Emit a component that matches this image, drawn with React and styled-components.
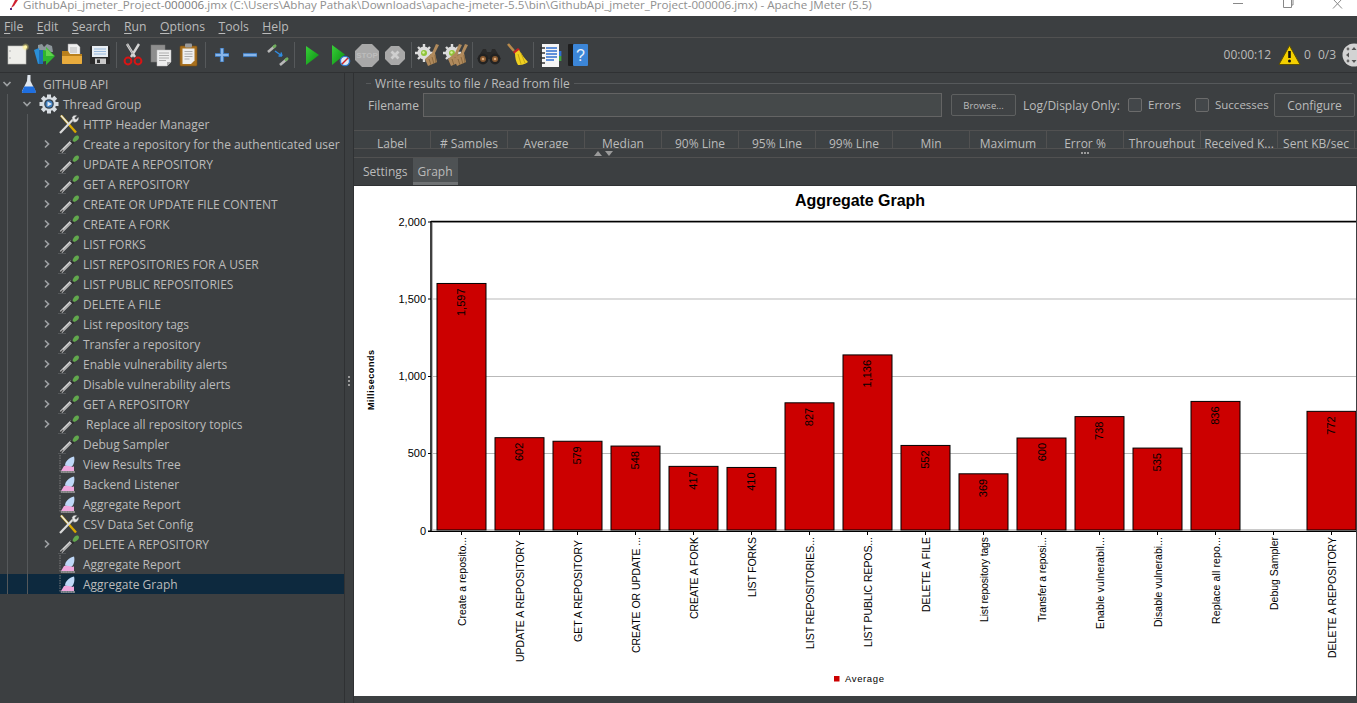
import React from 'react';
import styled, { createGlobalStyle } from 'styled-components';

const Global = createGlobalStyle`
  html, body { margin: 0; padding: 0; background: #3c3f41; overflow: hidden; }
  * { box-sizing: border-box; }
`;

const UI = `"Open Sans", "Noto Sans", sans-serif`;

const Page = styled.div`
  width: 1357px; height: 703px; display: flex; flex-direction: column;
  background: #3c3f41; color: #bbbbbb; font: 11.4px ${UI}; overflow: hidden;
`;
const TitleBar = styled.div`
  height: 16px; flex: none; background: #fff; display: flex; align-items: flex-start;
  padding-left: 6px; overflow: hidden;
`;
const TitleText = styled.div`
  color: #8f8f8f; font: 11.6px/9px ${UI}; margin-left: 3px; white-space: pre; flex: 1;
`;
const Accent = styled.span` color: #7a7a7a; `;
const WinControls = styled.div`
  display: flex; align-items: flex-start; gap: 30px; padding-right: 9px;
`;
const MenuBar = styled.div`
  height: 22px; flex: none; display: flex; align-items: center; gap: 13.5px; padding-left: 4px;
  border-bottom: 1px solid #515151; font-size: 12.2px;
`;
const MenuItem = styled.span` u { text-underline-offset: 2px; } `;
const Toolbar = styled.div`
  height: 35px; flex: none; display: flex; align-items: center; padding: 0 0 1px 2px;
  border-bottom: 1px solid #2f3133;
`;
const ToolSlot = styled.div` width: 28px; height: 28px; flex: none; `;
const ToolSep = styled.div`
  width: 5px; height: 26px; flex: none; display: flex; justify-content: center;
  &::before { content: ''; width: 1px; background: #56595b; }
`;
const Status = styled.div`
  margin-left: auto; display: flex; align-items: center; font-size: 12px;
`;
const StatusText = styled.span` margin-left: ${p => p.$gap}px; `;
const Main = styled.div` flex: 1; display: flex; min-height: 0; `;
const TreePane = styled.div` width: 344px; flex: none; padding-top: 1px; `;
const Row = styled.div`
  height: 20px; display: flex; align-items: center; padding-left: ${p => p.$depth * 20}px;
  font-size: 12px; white-space: pre;
  background-color: ${p => (p.$selected ? '#0d293e' : 'transparent')};
  background-image:
    ${p => (p.$depth >= 1 ? 'linear-gradient(#55585a,#55585a)' : 'none')},
    ${p => (p.$depth >= 2 ? 'linear-gradient(#55585a,#55585a)' : 'none')};
  background-repeat: no-repeat;
  background-size: 1px 100%;
  background-position: 7px 0, 27px 0;
`;
const Arrow = styled.div` width: 14px; height: 20px; flex: none; display: flex; align-items: center; justify-content: center; `;
const RowIcon = styled.div` width: 22px; height: 20px; margin-left: 4px; flex: none; `;
const RowLabel = styled.span` margin-left: 3px; `;
const Splitter = styled.div`
  width: 10px; flex: none; border-left: 1px solid #2f3133; border-right: 1px solid #2f3133;
  display: flex; flex-direction: column; align-items: center; justify-content: center; gap: 2px;
  padding-bottom: 14px;
`;
const Dot = styled.i` width: 2px; height: 2px; background: #9a9a9a; display: block; `;
const RightPane = styled.div` flex: 1; min-width: 0; display: flex; flex-direction: column; `;
const Group = styled.div` height: 57px; flex: none; padding: 2px 5px 0 12px; `;
const GroupTitle = styled.div`
  display: flex; align-items: center; height: 16px; font-size: 12px; white-space: pre;
  &::before { content: ''; width: 5px; height: 1px; background: #56595b; margin-right: 1px; }
  &::after { content: ''; flex: 1; height: 1px; background: #56595b; margin-left: 1px; }
`;
const FormRow = styled.div`
  display: flex; align-items: center; height: 24px; margin-top: 2px; font-size: 12px; white-space: pre;
`;
const FileLabel = styled.span` margin-left: 2px; width: 55px; flex: none; `;
const FileInput = styled.div` width: 519px; height: 24px; flex: none; background: #45494a; border: 1px solid #646464; `;
const SmallButton = styled.div`
  width: 65px; height: 22px; margin-left: 9px; flex: none; display: flex; align-items: center; justify-content: center;
  border: 1px solid #5e6060; border-radius: 2px; background: #3f4244; font-size: 9.5px;
`;
const OnlyLabel = styled.span` margin-left: 7px; width: 105px; flex: none; `;
const Check = styled.div` width: 14px; height: 14px; flex: none; margin-top: -1px; border: 1px solid #6b6b6b; border-radius: 2px; background: #43474a; `;
const CheckLabel = styled.span` margin-left: 6px; margin-top: -2px; width: ${p => p.$w}px; flex: none; font-size: 11.5px; `;
const ConfigButton = styled.div`
  width: 81px; height: 24px; flex: none; display: flex; align-items: center; justify-content: center;
  border: 1px solid #5e6060; border-radius: 2px; background: #3f4244;
`;
const TableHead = styled.div`
  height: 19px; flex: none; display: flex; overflow: hidden; border-top: 1px solid #515151; border-bottom: 1px solid #515151;
`;
const HeadCell = styled.div`
  width: 77px; flex: none; text-align: center; padding-top: 4px; font-size: 12px; line-height: 18px; white-space: nowrap;
  border-right: 1px solid #515151; background: #3e4244; overflow: hidden;
`;
const SplitBar = styled.div`
  height: 9px; flex: none; display: flex; align-items: center; justify-content: center;
  border-bottom: 1px solid #515151;
  gap: 1px;
`;
const SplitArrows = styled.div` width: 30px; margin-right: 458px; margin-left: -30px; display: flex; gap: 3px; padding-left: 2px; `;
const SplitDots = styled.div` display: flex; gap: 1px; margin-right: 0; `;
const Tabs = styled.div`
  height: 28px; flex: none; display: flex; padding-left: 4px; border-bottom: 1px solid #2f3133;
`;
const Tab = styled.div`
  padding: 0 5px; display: flex; align-items: center; font-size: 12px; padding-bottom: 1px;
  ${p => p.$active && `background: #4e5254; box-shadow: inset 0 -3px 0 #6f7274; padding-left: 5px;`}
`;
const ChartWrap = styled.div` height: 510px; flex: none; background: #fff; `;
const ChartSvg = styled.svg` display: block; `;
const BottomStrip = styled.div` flex: 1; background: #3c3f41; `;

/* ---------- icons ---------- */
const Ico = ({ children, vb = '0 0 28 28', w = 28, h = 28 }) => (
  <svg width={w} height={h} viewBox={vb} style={{ display: 'block' }}>{children}</svg>
);
const NewIcon = () => <Ico>
  <defs><radialGradient id="gl"><stop offset="0" stopColor="#ffef80"/><stop offset="1" stopColor="#ffef80" stopOpacity="0"/></radialGradient></defs>
  <rect x="6" y="5" width="18" height="18" fill="#eeeeea" stroke="#bdbdb8" strokeWidth=".6"/>
  <circle cx="8" cy="10" r=".8" fill="#aaa"/><circle cx="8" cy="17" r=".8" fill="#aaa"/>
  <circle cx="23.5" cy="6" r="4" fill="url(#gl)"/><circle cx="23.5" cy="6" r="1.6" fill="#fff6a8"/>
</Ico>;
const TemplatesIcon = () => <Ico>
  <path d="M8 4l4-1 2 3 3-3 5 2 1 6H8z" fill="#8d979b"/>
  <path d="M4 9l5-2 3 15-4 1z" fill="#2a8fd8"/>
  <path d="M9 9h4v14H9z" fill="#1f6fb4"/>
  <path d="M13 9l3 .5V6l9 9-9 9v-4l-3 .5z" fill="#2fb52f"/>
  <path d="M16 7l8 8h-8z" fill="#63d24d"/>
</Ico>;
const OpenIcon = () => <Ico>
  <path d="M10 3h9l3 3v9H10z" fill="#eee" stroke="#999" strokeWidth=".5"/>
  <path d="M12 7h7M12 9h7M12 11h7" stroke="#aaa" strokeWidth=".8"/>
  <path d="M4 10h6l2 3h12v9a1 1 0 0 1-1 1H5a1 1 0 0 1-1-1z" fill="#b9801c"/>
  <path d="M4 15h20v7a1 1 0 0 1-1 1H5a1 1 0 0 1-1-1z" fill="#e9ac3d"/>
</Ico>;
const SaveIcon = () => <Ico>
  <path d="M5 5h18a1 1 0 0 1 1 1v17H4V6a1 1 0 0 1 1-1z" fill="#2a2a2a"/>
  <rect x="6" y="5" width="16" height="11" fill="#e8edf2"/>
  <path d="M8 8h12M8 10.5h12M8 13h12" stroke="#8fb2d8" strokeWidth=".9"/>
  <rect x="9" y="17.5" width="11" height="5.5" fill="#c9c9c9"/><rect x="11" y="18.5" width="3" height="3.5" fill="#333"/>
</Ico>;
const CutIcon = () => <Ico>
  <path d="M8 3l8 13M20 3l-8 13" stroke="#d5d5d5" strokeWidth="2.4"/>
  <path d="M8 3l6 10" stroke="#8a8a8a" strokeWidth=".7"/>
  <circle cx="9" cy="20" r="3.4" fill="none" stroke="#d81414" strokeWidth="2"/>
  <circle cx="19" cy="20" r="3.4" fill="none" stroke="#d81414" strokeWidth="2"/>
</Ico>;
const CopyIcon = () => <Ico>
  <rect x="4" y="4" width="14" height="17" fill="#8e8e8e" stroke="#777" strokeWidth=".5"/>
  <path d="M10 9h14v12l-4 4H10z" fill="#eeeeee" stroke="#bbb" strokeWidth=".5"/>
  <path d="M12 12h10M12 14.5h10M12 17h10M12 19.5h7" stroke="#a5a5a5" strokeWidth=".9"/>
  <path d="M20 25l4-4h-4z" fill="#a8a8a8"/>
</Ico>;
const PasteIcon = () => <Ico>
  <rect x="5" y="5" width="17" height="20" rx="1" fill="#a8701e" stroke="#7a4f12" strokeWidth=".6"/>
  <rect x="10" y="2.5" width="7" height="4" rx="1" fill="#9a9a9a"/>
  <path d="M7.5 7.5h12v12l-3.5 3.5H7.5z" fill="#efefef"/>
  <path d="M9.5 10.5h8M9.5 13h8M9.5 15.5h8M9.5 18h5" stroke="#a5a5a5" strokeWidth=".9"/>
</Ico>;
const PlusIcon = () => <Ico>
  <path d="M14 7v14M7 14h14" stroke="#3f78b8" strokeWidth="4.2"/>
  <path d="M14 7.5v13M7.5 14h13" stroke="#88b6ea" strokeWidth="2.2"/>
</Ico>;
const MinusIcon = () => <Ico>
  <path d="M7 14h14" stroke="#3f78b8" strokeWidth="4.2"/>
  <path d="M7.5 14h13" stroke="#88b6ea" strokeWidth="2.2"/>
</Ico>;
const ToggleIcon = () => <Ico>
  <path d="M4 11l7-6" stroke="#b9b9b9" strokeWidth="2.6"/><path d="M9 6.5l3-2.5" stroke="#6fae5c" strokeWidth="2.6"/>
  <path d="M16 24l7-6" stroke="#b9b9b9" strokeWidth="2.6"/><path d="M21 19.5l3-2.5" stroke="#6fae5c" strokeWidth="2.6"/>
  <path d="M11 10l7 5M18 15l-3.5 0M18 15l-1-3.5" stroke="#2f8be0" strokeWidth="1.5" fill="none"/>
</Ico>;
const PlayIcon = () => <Ico>
  <defs><linearGradient id="pl" x1="0" x2="1" y1="0" y2="1"><stop offset="0" stopColor="#38d038"/><stop offset="1" stopColor="#0a8c12"/></linearGradient></defs>
  <path d="M9 5l13 9-13 10z" fill="url(#pl)"/>
</Ico>;
const NoPauseIcon = () => <Ico>
  <defs><linearGradient id="pl2" x1="0" x2="1" y1="0" y2="1"><stop offset="0" stopColor="#38d038"/><stop offset="1" stopColor="#0a8c12"/></linearGradient></defs>
  <path d="M7 4l13 9.5L7 24z" fill="url(#pl2)"/>
  <circle cx="20" cy="20" r="4.6" fill="#dfe8f5" stroke="#2f7ad0" strokeWidth="1.4"/>
  <path d="M17 23l6-6" stroke="#d02020" strokeWidth="1.4"/>
</Ico>;
const StopIcon = () => <Ico>
  <path d="M9 3h10l7 7v9l-7 7H9l-7-7v-9z" fill="#a8a8a8"/>
  <text x="14" y="17" textAnchor="middle" fontFamily="Liberation Sans, sans-serif" fontWeight="700" fontSize="8" fill="#bdbdbd">STOP</text>
</Ico>;
const ShutIcon = () => <Ico>
  <path d="M10 5h8l6 6v7l-6 6h-8l-6-6v-7z" fill="#a8a8a8"/>
  <path d="M10.5 10.5l7 7M17.5 10.5l-7 7" stroke="#cfcfcf" strokeWidth="2.8"/>
</Ico>;
const Broomlet = ({ dx = 0 }) => <g transform={`translate(${dx} 0)`}>
  <path d="M21 3l3 1-4 8 2 9-9 4-3-7 7-6z" fill="#b08a5c"/>
  <path d="M14 18l2 6M17 16l2 7M20 14l1 8" stroke="#82623a" strokeWidth=".8"/>
</g>;
const GearSmall = () => <g>
  <circle cx="10" cy="12" r="6.5" fill="#dcdcdc"/>
  <path d="M10 3v18M1 12h18M4 6l12 12M16 6L4 18" stroke="#dcdcdc" strokeWidth="2.4"/>
  <circle cx="10" cy="12" r="3" fill="#8fc43a"/><circle cx="9.5" cy="11.5" r="1.2" fill="#d8f0a0"/>
</g>;
const ClearIcon = () => <Ico><GearSmall/><Broomlet dx="1"/></Ico>;
const ClearAllIcon = () => <Ico><GearSmall/><Broomlet dx="-4"/><Broomlet dx="2"/></Ico>;
const SearchIcon = () => <Ico>
  <path d="M8 8h3l1 3h4l1-3h3l6 10H2z" fill="#2a2a2a"/>
  <circle cx="8" cy="18" r="5.4" fill="#222"/><circle cx="20" cy="18" r="5.4" fill="#222"/>
  <circle cx="8" cy="18" r="3" fill="#8a5a30"/><circle cx="20" cy="18" r="3" fill="#8a5a30"/>
  <circle cx="8" cy="18" r="1.3" fill="#d9a878"/><circle cx="20" cy="18" r="1.3" fill="#d9a878"/>
</Ico>;
const BroomIcon = () => <Ico>
  <path d="M5 3l6 7" stroke="#b88a4c" strokeWidth="2.6"/>
  <path d="M10 11l5-4 2 2-4 5z" fill="#c82424"/>
  <path d="M12 12l4-3c3 5 6 9 9 12-4 3-8 3-10 3-2-3-3-7-3-12z" fill="#f0d020"/>
  <path d="M15 13l3 10M18 12l4 10" stroke="#b89a10" strokeWidth=".8"/>
</Ico>;
const LogIcon = () => <Ico>
  <rect x="6" y="3" width="17" height="23" fill="#f5f5f5"/>
  <path d="M4 7h5M4 12h5M4 17h5M4 22h5" stroke="#333" strokeWidth="1.6"/>
  <path d="M10 7h11M10 10h11M10 13h11M10 16h11M10 19h8" stroke="#2f6fd0" strokeWidth="1.4"/>
  <rect x="23" y="10" width="2.4" height="5" fill="#2f6fd0"/><rect x="23" y="15" width="2.4" height="5" fill="#3fa13f"/>
</Ico>;
const HelpIcon = () => <Ico>
  <rect x="4" y="3" width="18" height="22" rx="1" fill="#1e1e1e"/>
  <rect x="9" y="3" width="15" height="22" rx="1" fill="#3c86d8"/>
  <text x="16.5" y="20" textAnchor="middle" fontFamily="Liberation Sans, sans-serif" fontSize="16" fill="#e8f1fb">?</text>
</Ico>;
const WarnIcon = () => <Ico w={23} h={22} vb="0 0 23 22">
  <path d="M11.5 1.5L22 20.5H1z" fill="#f4d000" stroke="#5d5000" strokeWidth="1"/>
  <path d="M11.5 7v7" stroke="#111" strokeWidth="2.6"/><circle cx="11.5" cy="17" r="1.5" fill="#111"/>
</Ico>;
const DiscIcon = () => <Ico w={15} h={24} vb="0 0 15 24">
  <circle cx="12" cy="12" r="11.5" fill="#d3d3d3"/>
  <path d="M12 4l2.5 3h-5zM12 20l2.5-3h-5zM4 12l3-2.5v5zM20 12l-3-2.5v5z" fill="#555"/>
  <circle cx="6" cy="6" r="1.4" fill="#666"/><circle cx="6" cy="18" r="1.4" fill="#666"/>
</Ico>;

const RI = ({ children }) => <svg width="22" height="20" viewBox="0 0 22 20" style={{ display: 'block' }}>{children}</svg>;
const FlaskIcon = () => <RI>
  <path d="M9.5 1h3v6l5 10q.6 2-1 2H5q-1.6 0-1-2l5-10z" fill="#dfe6ee"/>
  <path d="M6.2 12.5h9.6l2 5q.2 1.5-1 1.5H5q-1.300 0-1-1.500z" fill="#1f6fe0"/>
</RI>;
const GearIcon = () => <RI>
  <g transform="translate(11 10)">
    {[0, 45, 90, 135].map(a => <rect key={a} x="-2" y="-9.500" width="4" height="19" fill="#d8dde2" transform={`rotate(${a})`}/>)}
    <circle r="7" fill="#d8dde2"/><circle r="4.800" fill="#33414f"/><circle r="3.500" fill="#3f7fc0"/>
    <path d="M-1.500-2.500L3 0l-4.500 2.500z" fill="#dfe9f5"/>
  </g>
</RI>;
const ToolIcon = () => <RI>
  <path d="M3 1.500l15 17" stroke="#d8a800" strokeWidth="2.400"/>
  <path d="M3 1.500l8 9" stroke="#e8e8e8" strokeWidth="1.600"/>
  <path d="M2 19L15.500 5" stroke="#dadada" strokeWidth="2.200"/>
  <path d="M14 3.500a4 4 0 0 1 5-2l-2.500 2.500 1.500 1.500L20.500 3a4 4 0 0 1-5 5z" fill="#e6e6e6" stroke="#777" strokeWidth=".4"/>
</RI>;
const DropperIcon = () => <RI>
  <path d="M3 18L14 7" stroke="#d8d8d8" strokeWidth="3"/>
  <path d="M2 19.300L5 16" stroke="#333" strokeWidth="1.200"/>
  <path d="M4 17.500L13 8.500" stroke="#888" strokeWidth="1"/>
  <path d="M12.500 6.500l3 3" stroke="#2a2a2a" strokeWidth="1.800"/>
  <path d="M14.500 6.500c1-4 4.500-6 6-4.500s-.5 5-4.500 6z" fill="#62a84d"/>
  <path d="M0 19.500h8" stroke="#55585a" strokeWidth="1"/>
</RI>;
const ListenerIcon = () => <RI>
  <path d="M2 1v17h15" stroke="#7f7f7f" strokeWidth="1" strokeDasharray="1.500 1" fill="none"/>
  <path d="M3 17l3-5 4-1 5 2 1-1v5z" fill="#f0a8de"/>
  <path d="M7 11.500c0-4 4-8 9-9 1 3 0 8-2 10z" fill="#bfd8f8"/>
  <path d="M3 18h14" stroke="#b9b9b9" strokeWidth="1"/>
</RI>;
const Chevron = ({ down }) => (
  <svg width="10" height="10" viewBox="0 0 10 10" style={{ display: 'block' }}>
    <path d={down ? 'M1.500 3l3.500 3.500L8.500 3' : 'M3 1.500L6.500 5 3 8.500'} fill="none" stroke="#9da0a2" strokeWidth="1.700"/>
  </svg>
);

const toolGroups = [
  [NewIcon, TemplatesIcon, OpenIcon, SaveIcon],
  [CutIcon, CopyIcon, PasteIcon],
  [PlusIcon, MinusIcon, ToggleIcon],
  [PlayIcon, NoPauseIcon, StopIcon, ShutIcon],
  [ClearIcon, ClearAllIcon],
  [SearchIcon, BroomIcon],
  [LogIcon, HelpIcon],
];

const T = [
  ['GITHUB API', 0, 'open', FlaskIcon],
  ['Thread Group', 1, 'open', GearIcon],
  ['HTTP Header Manager', 2, '', ToolIcon],
  ['Create a repository for the authenticated user', 2, 'c', DropperIcon],
  ['UPDATE A REPOSITORY', 2, 'c', DropperIcon],
  ['GET A REPOSITORY', 2, 'c', DropperIcon],
  ['CREATE OR UPDATE FILE CONTENT', 2, 'c', DropperIcon],
  ['CREATE A FORK', 2, 'c', DropperIcon],
  ['LIST FORKS', 2, 'c', DropperIcon],
  ['LIST REPOSITORIES FOR A USER', 2, 'c', DropperIcon],
  ['LIST PUBLIC REPOSITORIES', 2, 'c', DropperIcon],
  ['DELETE A FILE', 2, 'c', DropperIcon],
  ['List repository tags', 2, 'c', DropperIcon],
  ['Transfer a repository', 2, 'c', DropperIcon],
  ['Enable vulnerability alerts', 2, 'c', DropperIcon],
  ['Disable vulnerability alerts', 2, 'c', DropperIcon],
  ['GET A REPOSITORY', 2, 'c', DropperIcon],
  [' Replace all repository topics', 2, 'c', DropperIcon],
  ['Debug Sampler', 2, '', DropperIcon],
  ['View Results Tree', 2, '', ListenerIcon],
  ['Backend Listener', 2, '', ListenerIcon],
  ['Aggregate Report', 2, '', ListenerIcon],
  ['CSV Data Set Config', 2, '', ToolIcon],
  ['DELETE A REPOSITORY', 2, 'c', DropperIcon],
  ['Aggregate Report', 2, '', ListenerIcon],
  ['Aggregate Graph', 2, '', ListenerIcon, true],
];

const columns = ['Label', '# Samples', 'Average', 'Median', '90% Line', '95% Line', '99% Line', 'Min', 'Maximum', 'Error %', 'Throughput', 'Received K...', 'Sent KB/sec'];

/* label, average, label bottom y, label top y */
const bars = [
  ['Create a reposito...', 1597, '1,597', 626, 537],
  ['UPDATE A REPOSITORY', 602, '602', 662, 540],
  ['GET A REPOSITORY', 579, '579', 642, 540],
  ['CREATE OR UPDATE ...', 548, '548', 653, 537],
  ['CREATE A FORK', 417, '417', 619, 537],
  ['LIST FORKS', 410, '410', 597, 537],
  ['LIST REPOSITORIES...', 827, '827', 649, 537],
  ['LIST PUBLIC REPOS...', 1136, '1,136', 647, 537],
  ['DELETE A FILE', 552, '552', 612, 537],
  ['List repository tags', 369, '369', 622, 537],
  ['Transfer a reposi...', 600, '600', 622, 537],
  ['Enable vulnerabil...', 738, '738', 629, 537],
  ['Disable vulnerabi...', 535, '535', 627, 537],
  ['Replace all repo...', 836, '836', 624, 537],
  ['Debug Sampler', 0, '', 610, 537],
  ['DELETE A REPOSITORY', 772, '772', 658, 537],
];

const chartFont = 'Liberation Sans, Arial, sans-serif';

const Chart = () => (
  <ChartSvg width="1003" height="510" viewBox="354 186 1003 510" fontFamily={chartFont} fill="#000">
    <text x="860" y="206" textAnchor="middle" fontWeight="700" fontSize="16" textLength="130">Aggregate Graph</text>
    <text transform="rotate(-90 374 380)" x="374" y="380" textAnchor="middle" fontSize="9" fontWeight="700" textLength="60">Milliseconds</text>
    {[[299], [376.500], [453.500]].map(([y]) => <line key={y} x1="432" x2="1357" y1={y} y2={y} stroke="#b9b9b9"/>)}
    <line x1="432.500" x2="1357" y1="222.500" y2="222.500" stroke="#b9b9b9"/>
    <line x1="431" x2="1357" y1="530" y2="530" stroke="#b9b9b9" strokeWidth="1.500"/>
    <line x1="432.500" x2="432.500" y1="222" y2="531" stroke="#b9b9b9"/>
    {[['2,000', 222], ['1,500', 299], ['1,000', 376.500], ['500', 453.500], ['0', 531]].map(([t, y]) => (
      <g key={t}>
        <line x1="428" x2="431" y1={y} y2={y} stroke="#000"/>
        <text x="426" y={y + 3.500} textAnchor="end" fontSize="11">{t}</text>
      </g>
    ))}
    {bars.map(([label, v, txt, bottom, top], i) => {
      const x = 437 + i * 58;
      const cx = x + 24.500;
      const y = 531 - v * 0.155;
      return (
        <g key={i}>
          {v > 0 && <rect x={x} y={y} width="49" height={530 - y} fill="#cc0000" stroke="#000" strokeWidth="1"/>}
          {v > 0 && (
            <text transform={`rotate(-90 ${cx + 4} ${y + 5})`} x={cx + 4} y={y + 5} textAnchor="end" fontSize="11">{txt}</text>
          )}
          <line x1={cx} x2={cx} y1="532" y2="535" stroke="#000"/>
          <text transform={`rotate(-90 ${cx + 4.500} ${bottom})`} x={cx + 4.500} y={bottom} fontSize="10.500" textLength={bottom - top} lengthAdjust="spacing">{label}</text>
        </g>
      );
    })}
    <line x1="431" x2="1357" y1="221.500" y2="221.500" stroke="#000" strokeWidth="1.500"/>
    <line x1="431" x2="431" y1="221" y2="532" stroke="#000" strokeWidth="1.500"/>
    <line x1="428" x2="1357" y1="531.500" y2="531.500" stroke="#000" strokeWidth="1.200"/>
    <rect x="834" y="676" width="5.500" height="5.500" fill="#cc0000"/>
    <text x="845" y="682" fontSize="9.500" textLength="39">Average</text>
    <line x1="1356.500" x2="1356.500" y1="186" y2="696" stroke="#3c3f41"/>
  </ChartSvg>
);

export default function App() {
  return (
    <Page>
      <Global />
      <TitleBar>
        <svg width="14" height="10" viewBox="0 0 14 10" style={{ display: 'block', flex: 'none' }}>
          <path d="M5 8l4-8h3L8 6z" fill="#d02030"/><path d="M4 8h2v2H4z" fill="#5a2a80"/>
        </svg>
        <TitleText>GithubApi_jmeter_Project-<Accent>000006</Accent>.jmx (C:\Users\Abhay Pathak\Downloads\apache-jmeter-5.5\bin\GithubApi_jmeter_Project-000006.jmx) - Apache JMeter (5.5)</TitleText>
        <WinControls>
          <svg width="20" height="6" viewBox="0 0 20 6"><path d="M5 3.500h10" stroke="#888" strokeWidth="1"/></svg>
          <svg width="20" height="8" viewBox="0 0 20 8"><path d="M5.500 0v7.500h8V0M7.500 0v-1M13.500 0" fill="none" stroke="#888" strokeWidth="1"/><path d="M8 0v-1h7v6h-1.500" fill="none" stroke="#888"/></svg>
          <svg width="20" height="9" viewBox="0 0 20 9"><path d="M5-1l9 9.500M14-1L5 8.500" stroke="#888" strokeWidth="1"/></svg>
        </WinControls>
      </TitleBar>
      <MenuBar>
        <MenuItem><u>F</u>ile</MenuItem>
        <MenuItem><u>E</u>dit</MenuItem>
        <MenuItem><u>S</u>earch</MenuItem>
        <MenuItem><u>R</u>un</MenuItem>
        <MenuItem><u>O</u>ptions</MenuItem>
        <MenuItem><u>T</u>ools</MenuItem>
        <MenuItem><u>H</u>elp</MenuItem>
      </MenuBar>
      <Toolbar>
        {toolGroups.map((g, i) => (
          <React.Fragment key={i}>
            {i > 0 && <ToolSep />}
            {g.map((I, j) => <ToolSlot key={j}><I /></ToolSlot>)}
          </React.Fragment>
        ))}
        <Status>
          <span>00:00:12</span>
          <StatusText $gap={7}><WarnIcon /></StatusText>
          <StatusText $gap={3}>0</StatusText>
          <StatusText $gap={7}>0/3</StatusText>
          <StatusText $gap={6}><DiscIcon /></StatusText>
        </Status>
      </Toolbar>
      <Main>
        <TreePane>
          {T.map(([label, depth, kind, I, sel], i) => (
            <Row key={i} $depth={depth} $selected={sel}>
              <Arrow>{kind && <Chevron down={kind === 'open'} />}</Arrow>
              <RowIcon><I /></RowIcon>
              <RowLabel>{label}</RowLabel>
            </Row>
          ))}
        </TreePane>
        <Splitter><Dot /><Dot /><Dot /></Splitter>
        <RightPane>
          <Group>
            <GroupTitle>{' Write results to file / Read from file '}</GroupTitle>
            <FormRow>
              <FileLabel>Filename</FileLabel>
              <FileInput />
              <SmallButton>Browse...</SmallButton>
              <OnlyLabel>Log/Display Only:</OnlyLabel>
              <Check />
              <CheckLabel $w={47}>Errors</CheckLabel>
              <Check />
              <CheckLabel $w={59}>Successes</CheckLabel>
              <ConfigButton>Configure</ConfigButton>
            </FormRow>
          </Group>
          <TableHead>
            {columns.map(c => <HeadCell key={c}>{c}</HeadCell>)}
          </TableHead>
          <SplitBar>
            <SplitArrows>
              <svg width="8" height="5" viewBox="0 0 8 5"><path d="M4 0l4 5H0z" fill="#9a9a9a"/></svg>
              <svg width="8" height="5" viewBox="0 0 8 5"><path d="M4 5l4-5H0z" fill="#9a9a9a"/></svg>
            </SplitArrows>
            <SplitDots><Dot /><Dot /><Dot /></SplitDots>
          </SplitBar>
          <Tabs>
            <Tab>Settings</Tab>
            <Tab $active>Graph</Tab>
          </Tabs>
          <ChartWrap><Chart /></ChartWrap>
          <BottomStrip />
        </RightPane>
      </Main>
    </Page>
  );
}
